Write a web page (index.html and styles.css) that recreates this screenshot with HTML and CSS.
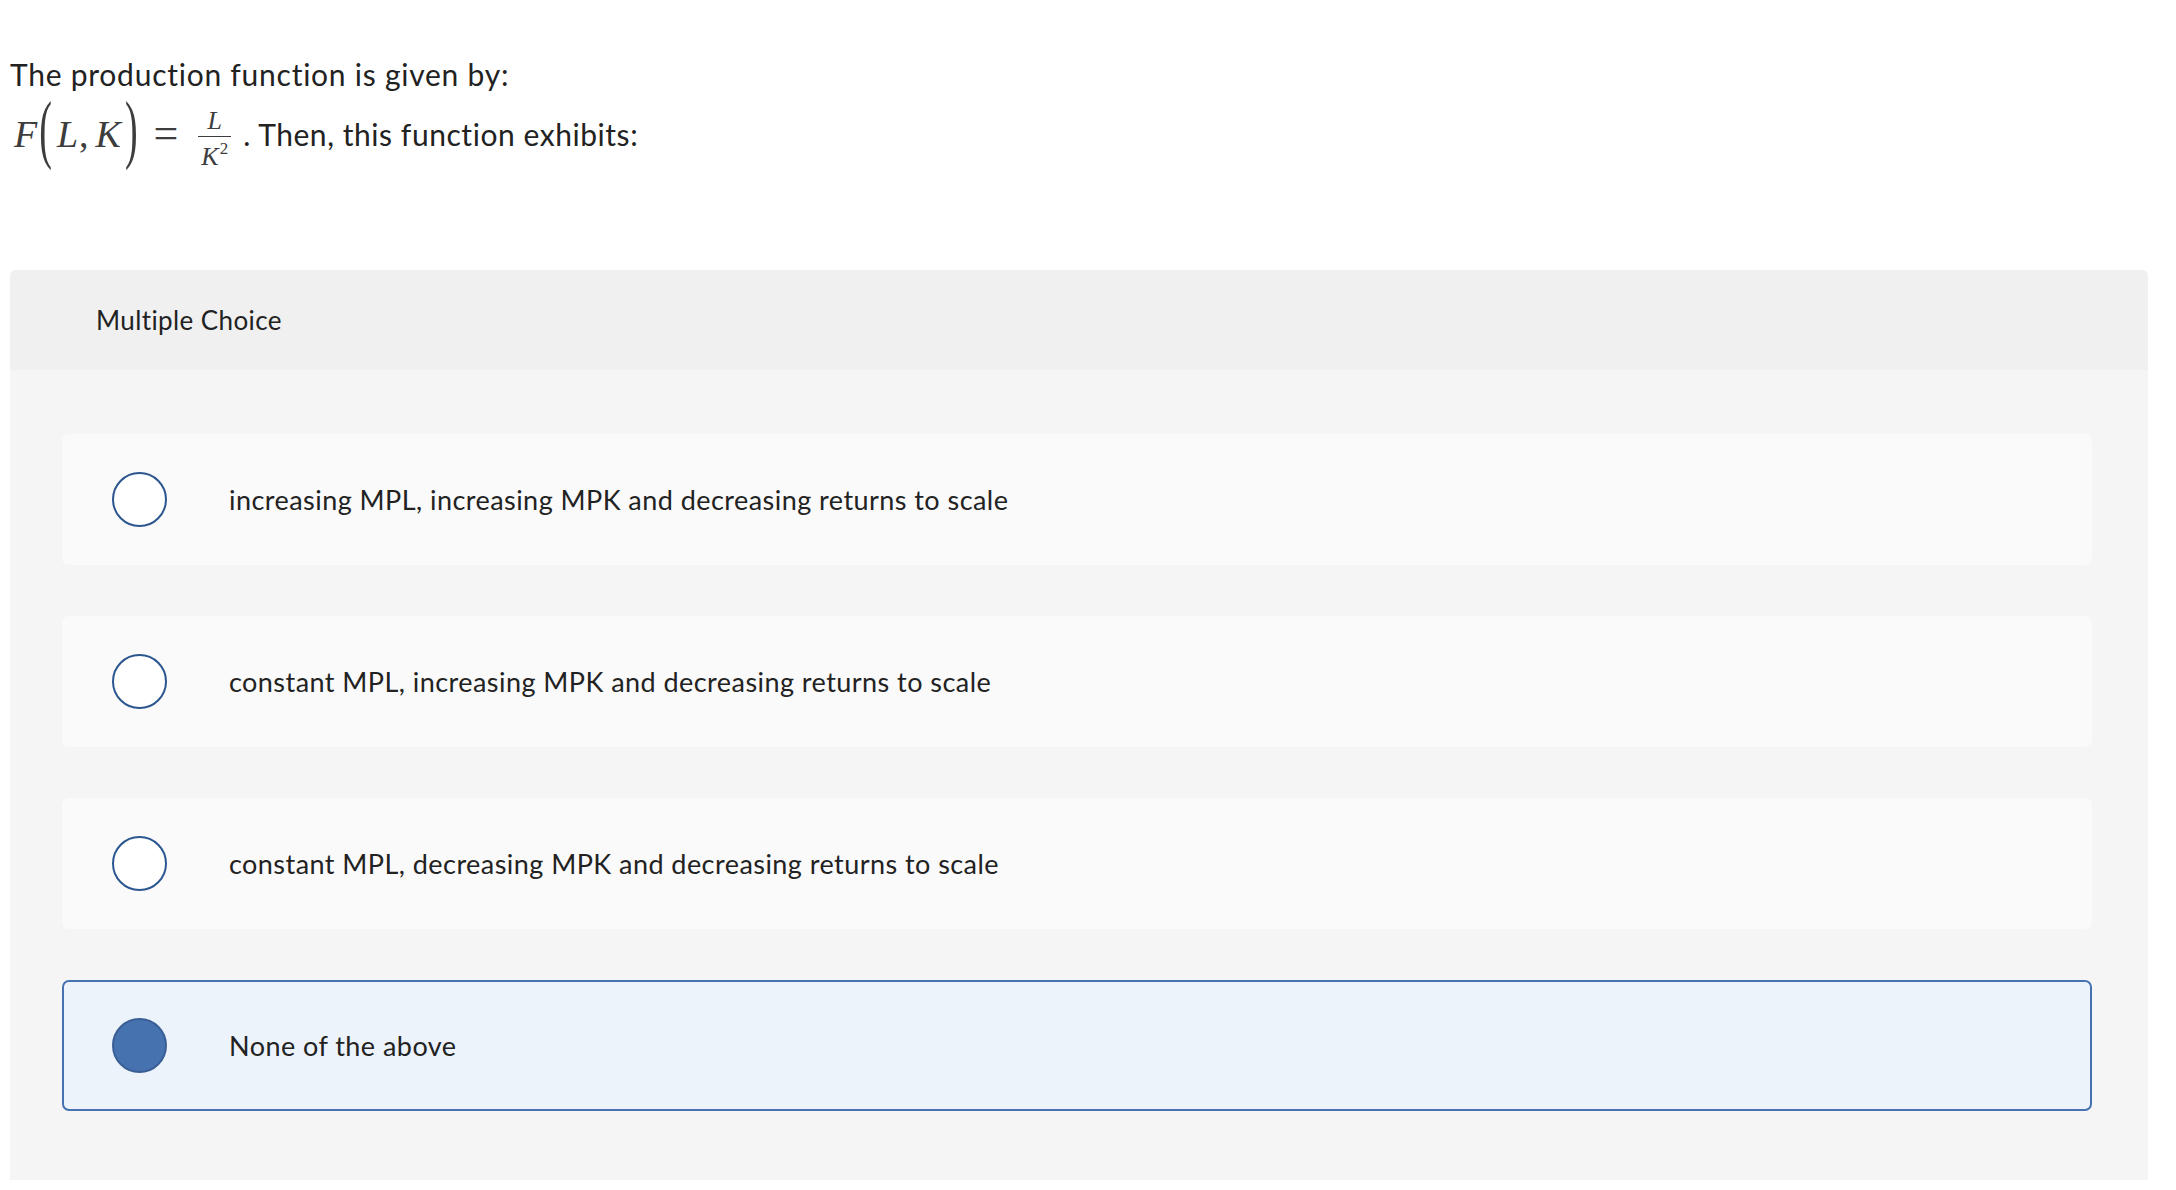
FILE: index.html
```html
<!DOCTYPE html>
<html lang="en">
<head>
  <meta charset="UTF-8" />
  <meta name="viewport" content="width=device-width,initial-scale=1" />
  <title>Multiple Choice</title>
  <link rel="stylesheet" href="styles.css">
</head>
<body>
  <div class="question">
    <p class="q-line">The production function is given by:</p>
    <div class="q-formula">
      <span class="math">
        <i class="mi f">F</i>
        <span class="paren open">(</span>
        <span class="mrow"><i>L</i><span class="comma">,</span><i>K</i></span>
        <span class="paren close">)</span>
        <span class="eq">=</span>
        <span class="frac">
          <i class="num">L</i>
          <span class="den"><i>K</i><sup>2</sup></span>
        </span>
      </span>
      <span class="q-text">. Then, this function exhibits:</span>
    </div>
  </div>

  <div class="choice-panel">
    <div class="panel-header">Multiple Choice</div>
    <div class="panel-body">
      <label class="option">
        <span class="radio"></span>
        <span class="option-text">increasing MPL, increasing MPK and decreasing returns to scale</span>
      </label>
      <label class="option">
        <span class="radio"></span>
        <span class="option-text">constant MPL, increasing MPK and decreasing returns to scale</span>
      </label>
      <label class="option">
        <span class="radio"></span>
        <span class="option-text">constant MPL, decreasing MPK and decreasing returns to scale</span>
      </label>
      <label class="option selected">
        <span class="radio"></span>
        <span class="option-text">None of the above</span>
      </label>
    </div>
  </div>
</body>
</html>
```

FILE: styles.css
```css
/* General */
body { margin: 0; padding: 0 28px 0 10px; background: #fff; font-family: Lato, "Noto Sans", sans-serif; color: #222; }

/* Question */
.question { padding-top: 56px; }
.q-line { margin: 0; font-size: 30px; line-height: 36px; letter-spacing: 0.75px; }
.q-formula { display: flex; align-items: center; height: 76px; margin-top: 4px; }
.q-text { font-size: 30px; line-height: 36px; margin-left: 12px; letter-spacing: 0.55px; }

/* Formula */
.math { display: flex; align-items: center; font-family: "Liberation Serif", serif; color: #3d3d3d; font-size: 38px; line-height: 1; padding-left: 4px; }
.math i { font-style: italic; }
.math .paren { display: inline-block; transform: scaleY(2); margin-bottom: 12px; }
.math .paren.open { margin-left: 2px; margin-right: 5px; }
.math .paren.close { margin-left: 4px; }
.math .comma { margin: 0 7px 0 1px; }
.math .eq { font-size: 44px; margin: 0 20px 0 16px; }
.frac { display: inline-flex; flex-direction: column; align-items: center; font-size: 26px; line-height: 1; margin-top: 9px; }
.frac .num { padding: 0 4px 2px; border-bottom: 1px solid #3d3d3d; width: 100%; box-sizing: border-box; text-align: center; }
.frac .den { padding: 3px 3px 0; }
.frac sup { font-size: 17px; vertical-align: 11px; margin-left: 1px; line-height: 1; }

/* Choice panel */
.choice-panel { margin-top: 98px; background: #f5f5f5; border-radius: 6px 6px 0 0; }
.panel-header { height: 100px; display: flex; align-items: center; padding-left: 86px; background: #f0f0f0; border-radius: 6px 6px 0 0; font-size: 26px; letter-spacing: 0.4px; }
.panel-body { padding: 64px 56px 69px 52px; display: flex; flex-direction: column; gap: 51px; }
.option { display: flex; align-items: center; gap: 62px; height: 131px; box-sizing: border-box; padding-left: 48px; background: #fafafa; border: 2px solid transparent; border-radius: 7px; cursor: pointer; }
.option .radio { flex: 0 0 55px; height: 55px; box-sizing: border-box; border: 2px solid #2b568f; border-radius: 50%; background: #fff; }
.option-text { font-size: 27px; letter-spacing: 0.45px; }
.option.selected { background: #ecf3fb; border-color: #4672b2; }
.option.selected .radio { background: #4672b0; border-color: #3a5f96; }
```
